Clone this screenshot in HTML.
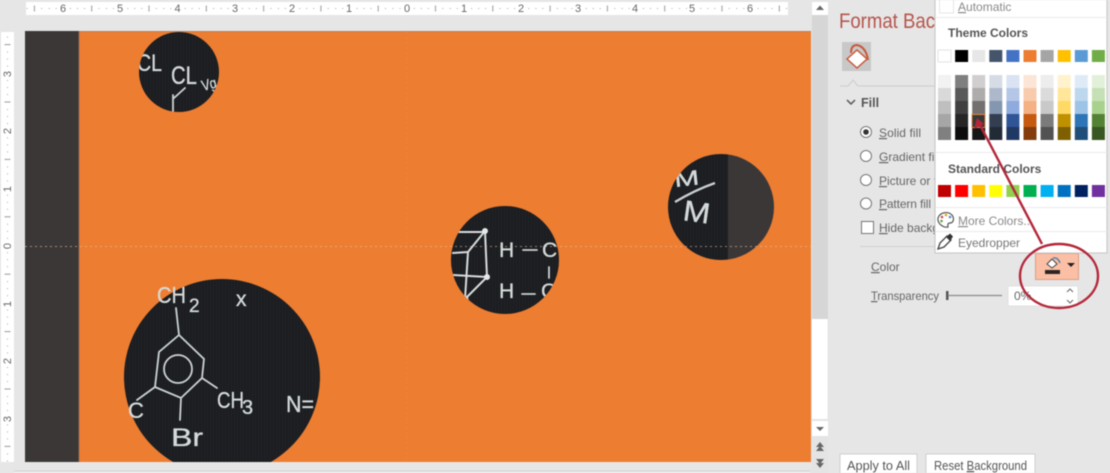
<!DOCTYPE html>
<html lang="en"><head><meta charset="utf-8"><title>Format Background</title>
<style>
html,body{margin:0;padding:0;width:1110px;height:473px;overflow:hidden;background:#e6e6e6}
svg{display:block;filter:blur(.6px)}
text{font-family:"Liberation Sans",sans-serif}
.t{font-size:12px;fill:#666}
.u{text-decoration:underline}
.c{fill:#d4dad9;stroke:#d4dad9;stroke-width:.35}
.b{fill:none;stroke:#ccd3d2;stroke-width:1.8;stroke-linecap:round}
.n{font-size:11px;fill:#666;text-anchor:middle}
</style></head><body>
<svg width="1110" height="473" viewBox="0 0 1110 473" xmlns="http://www.w3.org/2000/svg">
<defs>
<pattern id="rh" x="63" y="2" width="57.3" height="13" patternUnits="userSpaceOnUse">
<g fill="#aaa"><rect x="7" y="6" width="1" height="1"/><rect x="14" y="6" width="1" height="1"/><rect x="21" y="6" width="1" height="1"/><rect x="28.2" y="3.5" width="1" height="6" fill="#999"/><rect x="35.5" y="6" width="1" height="1"/><rect x="43" y="6" width="1" height="1"/><rect x="50" y="6" width="1" height="1"/></g>
</pattern>
<pattern id="rv" x="1" y="73" width="13" height="57.4" patternUnits="userSpaceOnUse">
<g fill="#aaa"><rect x="6" y="7" width="1" height="1"/><rect x="6" y="14" width="1" height="1"/><rect x="6" y="21" width="1" height="1"/><rect x="3.5" y="28.5" width="6" height="1" fill="#999"/><rect x="6" y="36" width="1" height="1"/><rect x="6" y="43" width="1" height="1"/><rect x="6" y="50" width="1" height="1"/></g>
</pattern>
<pattern id="ch" width="3" height="8" patternUnits="userSpaceOnUse"><rect width="3" height="8" fill="#1b1d20"/><rect width="1" height="8" fill="#202225"/></pattern>
<clipPath id="c1"><circle cx="179" cy="72" r="40"/></clipPath>
<clipPath id="c2"><path d="M25 31H811V462H25Z"/></clipPath>
<clipPath id="c3"><circle cx="505" cy="260" r="54"/></clipPath>
<clipPath id="c4"><circle cx="721" cy="207" r="53"/></clipPath>
</defs>

<rect width="1110" height="473" fill="#e6e6e6"/>

<!-- rulers -->
<rect x="26" y="2" width="762" height="13" fill="#fff"/>
<rect x="26" y="2" width="762" height="13" fill="url(#rh)"/>
<g class="n">
<text class="n" x="63" y="12">6</text><text class="n" x="120" y="12">5</text><text class="n" x="177.500" y="12">4</text><text class="n" x="235" y="12">3</text><text class="n" x="292" y="12">2</text><text class="n" x="349" y="12">1</text><text class="n" x="407" y="12">0</text><text class="n" x="464" y="12">1</text><text class="n" x="521" y="12">2</text><text class="n" x="578" y="12">3</text><text class="n" x="635" y="12">4</text><text class="n" x="692" y="12">5</text><text class="n" x="750" y="12">6</text>
</g>
<rect x="1" y="32" width="13" height="430" fill="#fff"/>
<rect x="1" y="32" width="13" height="430" fill="url(#rv)"/>
<text class="n" transform="translate(11,74) rotate(-90)">3</text>
<text class="n" transform="translate(11,131) rotate(-90)">2</text>
<text class="n" transform="translate(11,189) rotate(-90)">1</text>
<text class="n" transform="translate(11,246) rotate(-90)">0</text>
<text class="n" transform="translate(11,304) rotate(-90)">1</text>
<text class="n" transform="translate(11,361) rotate(-90)">2</text>
<text class="n" transform="translate(11,419) rotate(-90)">3</text>

<!-- slide -->
<rect x="25" y="31" width="786" height="431" fill="#ed7d31"/>
<rect x="25" y="31" width="54" height="431" fill="#3b3737"/>
<rect x="79" y="31" width="732" height="1" fill="#b87f5e"/>
<rect x="78.500" y="31" width="1" height="431" fill="#8c6a58"/>

<!-- circle 1 -->
<g clip-path="url(#c1)">
<rect x="135" y="30" width="90" height="85" fill="url(#ch)"/>
<text class="c" x="137" y="71" font-size="24" textLength="25" lengthAdjust="spacingAndGlyphs">CL</text>
<text class="c" x="171" y="84" font-size="25" textLength="26" lengthAdjust="spacingAndGlyphs">CL</text>
<text class="c" transform="translate(203,91) rotate(-14)" font-size="15" textLength="15" lengthAdjust="spacingAndGlyphs">Vg</text>
<path class="b" d="M185 88L174 98M173 95V112"/>
</g>

<!-- circle 2 -->
<g clip-path="url(#c2)">
<circle cx="222" cy="377" r="98" fill="url(#ch)"/>
<g fill="none" stroke="#ccd3d2" stroke-width="1.800" stroke-linecap="round">
<path d="M176 308L179 335L204 359L202 378L181 398L155 387L159 352L179 335"/>
<circle cx="178" cy="369" r="14"/>
<path d="M202 378L217 388M155 387L137 400M181 398L180 420"/>
</g>
<text class="c" x="157" y="303" font-size="23" textLength="29" lengthAdjust="spacingAndGlyphs">CH</text>
<text class="c" x="189" y="312" font-size="19">2</text>
<text class="c" x="236" y="306" font-size="21">x</text>
<text class="c" x="217" y="408" font-size="23" textLength="27" lengthAdjust="spacingAndGlyphs">CH</text>
<text class="c" x="242" y="414" font-size="20">3</text>
<text class="c" x="286" y="412" font-size="23" textLength="28" lengthAdjust="spacingAndGlyphs">N=</text>
<text class="c" x="171" y="446" font-size="25" textLength="32" lengthAdjust="spacingAndGlyphs">Br</text>
<text class="c" x="128" y="418" font-size="22">C</text>
</g>

<!-- circle 3 -->
<g clip-path="url(#c3)">
<rect x="450" y="205" width="110" height="110" fill="url(#ch)"/>
<g fill="none" stroke="#d8dddc" stroke-width="2" stroke-linecap="round">
<path d="M485 231L468 252L465 299L487 277L485 231M453 232H485M453 253L468 252M453 275L487 277"/>
</g>
<circle cx="485" cy="231" r="3" fill="#e4e8e7"/><circle cx="487" cy="277" r="3" fill="#e4e8e7"/><circle cx="466" cy="299" r="2.500" fill="#e4e8e7"/>
<text class="c" x="499" y="257" font-size="21">H</text>
<text class="c" x="542" y="257" font-size="21">C</text>
<text class="c" x="499" y="298" font-size="21">H</text>
<text class="c" x="541" y="298" font-size="21">C</text>
<path class="b" d="M523 250H537M549 267V278M522 294H535"/>
</g>

<!-- circle 4 -->
<g clip-path="url(#c4)">
<rect x="665" y="150" width="63" height="115" fill="url(#ch)"/>
<rect x="728" y="150" width="50" height="115" fill="#3b3737"/>
<text class="c" transform="translate(675,187) rotate(-6)" font-size="21" textLength="25" lengthAdjust="spacingAndGlyphs">M</text>
<path d="M675 202Q695 190 715 183" fill="none" stroke="#c8cfce" stroke-width="2.400"/>
<text class="c" transform="translate(682,220) rotate(8)" font-size="29" textLength="27" lengthAdjust="spacingAndGlyphs">M</text>
</g>

<!-- guides -->
<path d="M25 246.500H811" stroke="#e0c2ac" stroke-opacity=".6" stroke-dasharray="2 3"/>
<path d="M406.500 32V462" stroke="#e99a62" stroke-opacity=".4" stroke-dasharray="2 3"/>

<!-- scrollbar -->
<rect x="811" y="0" width="17" height="473" fill="#e4e4e4"/>
<rect x="812" y="15" width="16" height="304" fill="#d6d6d6"/>
<rect x="812" y="2" width="16" height="13" fill="#fff"/>
<path d="M816 10L820 5.500L824 10Z" fill="#666"/>
<rect x="812" y="319" width="15.500" height="100" fill="#fff"/>
<rect x="812" y="421" width="16" height="15" fill="#fff"/>
<path d="M816 427H824L820 431Z" fill="#666"/>
<path d="M816 447L820 442L824 447ZM816 451L820 446L824 451Z" fill="#666"/>
<path d="M816 459L820 464L824 459ZM816 463L820 468L824 463Z" fill="#666"/>

<!-- bottom edge -->
<rect x="14" y="471" width="796" height="2" fill="#f0f0f0"/>
<rect x="14" y="470.500" width="796" height="1" fill="#cfcfcf"/>

<!-- panel -->
<text x="839" y="28" font-size="21.500" fill="#b5554c" textLength="96" lengthAdjust="spacingAndGlyphs">Format Bac</text>
<rect x="842" y="42" width="29" height="29" fill="#c8c8c8"/>
<path d="M847 59L857 50L867 59L857 68Z" fill="#fff" stroke="#c9583a" stroke-width="1.500"/>
<path d="M851 53Q851 45 857 45Q866 47 868 60" fill="none" stroke="#c9583a" stroke-width="2"/>
<path d="M840 86H848L853 80L858 86H935" fill="none" stroke="#cdcdcd"/>
<path d="M847 100L851 104L855 100" fill="none" stroke="#555" stroke-width="1.500"/>
<text x="861" y="107" font-size="12.500" font-weight="bold" fill="#555">Fill</text>

<circle cx="866" cy="132" r="5.500" fill="#fff" stroke="#777"/><circle cx="866" cy="132" r="2.800" fill="#333"/>
<circle cx="866" cy="156" r="5.500" fill="#fff" stroke="#777"/>
<circle cx="866" cy="180" r="5.500" fill="#fff" stroke="#777"/>
<circle cx="866" cy="203.500" r="5.500" fill="#fff" stroke="#777"/>
<rect x="861.500" y="221.500" width="12" height="12" fill="#fff" stroke="#777"/>
<text class="t" x="879" y="137" textLength="42"><tspan class="u">S</tspan>olid fill</text>
<text class="t" x="879" y="161"><tspan class="u">G</tspan>radient fill</text>
<text class="t" x="879" y="185"><tspan class="u">P</tspan>icture or t</text>
<text class="t" x="879" y="208" textLength="52"><tspan class="u">P</tspan>attern fill</text>
<text class="t" x="879" y="232"><tspan class="u">H</tspan>ide backg</text>
<path d="M860 246.500H935" stroke="#d0d0d0"/>

<text class="t" x="871" y="271"><tspan class="u">C</tspan>olor</text>
<text class="t" x="871" y="300" textLength="68" lengthAdjust="spacingAndGlyphs"><tspan class="u">T</tspan>ransparency</text>
<rect x="946" y="291" width="2.500" height="9" fill="#555"/>
<path d="M948 295.500H1002" stroke="#8a8a8a" stroke-width="1.200"/>
<rect x="1008" y="286" width="70" height="20" fill="#fff" stroke="#e0e0e0"/>
<text class="t" x="1014" y="300" font-size="11.500">0%</text>
<path d="M1067 292L1070 289L1073 292M1067 300L1070 303L1073 300" fill="none" stroke="#666" stroke-width="1"/>

<rect x="1035.500" y="253.500" width="43" height="26" fill="#fbbfa6" stroke="#dc9f85"/>
<path d="M1047 264L1052 259L1057 264L1052 268Z" fill="#fff" stroke="#444"/>
<path d="M1053 258Q1058 257 1060 263" fill="none" stroke="#5a7fa8" stroke-width="1.500"/>
<rect x="1045" y="270" width="15" height="4" fill="#2b2422"/>
<path d="M1067 263H1075L1071 267Z" fill="#222"/>

<!-- bottom buttons -->
<rect x="840" y="454" width="77" height="22" fill="#fff" stroke="#cfcfcf"/>
<text x="847" y="470" font-size="12.500" fill="#555" textLength="63" lengthAdjust="spacingAndGlyphs">Apply to All</text>
<rect x="926" y="454" width="109" height="22" fill="#fff" stroke="#cfcfcf"/>
<text x="934" y="470" font-size="12.500" fill="#555" textLength="93" lengthAdjust="spacingAndGlyphs">Reset <tspan class="u">B</tspan>ackground</text>

<!-- dropdown -->
<rect x="935" y="-1" width="172" height="254" fill="#fff" stroke="#c4c4c4"/>
<rect x="939.500" y="-1" width="14" height="14" fill="#fff" stroke="#e6e6e6"/>
<text x="958" y="11" font-size="12" fill="#8a8a8a"><tspan class="u">A</tspan>utomatic</text>
<path d="M936 17.500H1107M936 152.500H1107M936 207.500H1107M936 231.500H1107" stroke="#eaeaea"/>
<text x="948" y="37" font-size="12" font-weight="bold" fill="#555">Theme Colors</text>
<text x="948" y="173" font-size="12" font-weight="bold" fill="#555">Standard Colors</text>

<g>
<rect x="938" y="50" width="13" height="12" fill="#fff" stroke="#e4e4e4"/>
<rect x="955.100" y="50" width="13" height="12" fill="#000"/>
<rect x="972.200" y="50" width="13" height="12" fill="#e7e6e6"/>
<rect x="989.300" y="50" width="13" height="12" fill="#44546a"/>
<rect x="1006.400" y="50" width="13" height="12" fill="#4472c4"/>
<rect x="1023.500" y="50" width="13" height="12" fill="#ed7d31"/>
<rect x="1040.600" y="50" width="13" height="12" fill="#a5a5a5"/>
<rect x="1057.700" y="50" width="13" height="12" fill="#ffc000"/>
<rect x="1074.800" y="50" width="13" height="12" fill="#5b9bd5"/>
<rect x="1091.900" y="50" width="13" height="12" fill="#70ad47"/>
</g>
<g>
<rect x="938" y="75" width="13" height="13" fill="#f2f2f2"/><rect x="938" y="88" width="13" height="13" fill="#d9d9d9"/><rect x="938" y="101" width="13" height="13" fill="#bfbfbf"/><rect x="938" y="114" width="13" height="13" fill="#a6a6a6"/><rect x="938" y="127" width="13" height="13" fill="#808080"/>
<rect x="955.100" y="75" width="13" height="13" fill="#7f7f7f"/><rect x="955.100" y="88" width="13" height="13" fill="#595959"/><rect x="955.100" y="101" width="13" height="13" fill="#404040"/><rect x="955.100" y="114" width="13" height="13" fill="#262626"/><rect x="955.100" y="127" width="13" height="13" fill="#0d0d0d"/>
<rect x="972.200" y="75" width="13" height="13" fill="#d0cece"/><rect x="972.200" y="88" width="13" height="13" fill="#aeabab"/><rect x="972.200" y="101" width="13" height="13" fill="#757070"/><rect x="972.200" y="114" width="13" height="13" fill="#3a3838"/><rect x="972.200" y="127" width="13" height="13" fill="#171717"/>
<rect x="989.300" y="75" width="13" height="13" fill="#d6dce5"/><rect x="989.300" y="88" width="13" height="13" fill="#adb9ca"/><rect x="989.300" y="101" width="13" height="13" fill="#8497b0"/><rect x="989.300" y="114" width="13" height="13" fill="#333f50"/><rect x="989.300" y="127" width="13" height="13" fill="#222a35"/>
<rect x="1006.400" y="75" width="13" height="13" fill="#dae3f3"/><rect x="1006.400" y="88" width="13" height="13" fill="#b4c7e7"/><rect x="1006.400" y="101" width="13" height="13" fill="#8faadc"/><rect x="1006.400" y="114" width="13" height="13" fill="#2f5597"/><rect x="1006.400" y="127" width="13" height="13" fill="#203864"/>
<rect x="1023.500" y="75" width="13" height="13" fill="#fbe5d6"/><rect x="1023.500" y="88" width="13" height="13" fill="#f8cbad"/><rect x="1023.500" y="101" width="13" height="13" fill="#f4b183"/><rect x="1023.500" y="114" width="13" height="13" fill="#c55a11"/><rect x="1023.500" y="127" width="13" height="13" fill="#843c0c"/>
<rect x="1040.600" y="75" width="13" height="13" fill="#ededed"/><rect x="1040.600" y="88" width="13" height="13" fill="#dbdbdb"/><rect x="1040.600" y="101" width="13" height="13" fill="#c9c9c9"/><rect x="1040.600" y="114" width="13" height="13" fill="#7b7b7b"/><rect x="1040.600" y="127" width="13" height="13" fill="#525252"/>
<rect x="1057.700" y="75" width="13" height="13" fill="#fff2cc"/><rect x="1057.700" y="88" width="13" height="13" fill="#ffe699"/><rect x="1057.700" y="101" width="13" height="13" fill="#ffd966"/><rect x="1057.700" y="114" width="13" height="13" fill="#bf9000"/><rect x="1057.700" y="127" width="13" height="13" fill="#7f6000"/>
<rect x="1074.800" y="75" width="13" height="13" fill="#deebf7"/><rect x="1074.800" y="88" width="13" height="13" fill="#bdd7ee"/><rect x="1074.800" y="101" width="13" height="13" fill="#9dc3e6"/><rect x="1074.800" y="114" width="13" height="13" fill="#2e75b6"/><rect x="1074.800" y="127" width="13" height="13" fill="#1f4e79"/>
<rect x="1091.900" y="75" width="13" height="13" fill="#e2f0d9"/><rect x="1091.900" y="88" width="13" height="13" fill="#c5e0b4"/><rect x="1091.900" y="101" width="13" height="13" fill="#a9d18e"/><rect x="1091.900" y="114" width="13" height="13" fill="#548235"/><rect x="1091.900" y="127" width="13" height="13" fill="#385723"/>
</g>
<rect x="972" y="114.500" width="13" height="13" fill="#3a3838" stroke="#e0883e" stroke-width="1"/>
<g>
<rect x="938" y="185" width="13" height="12" fill="#c00000"/>
<rect x="955.100" y="185" width="13" height="12" fill="#ff0000"/>
<rect x="972.200" y="185" width="13" height="12" fill="#ffc000"/>
<rect x="989.300" y="185" width="13" height="12" fill="#ffff00"/>
<rect x="1006.400" y="185" width="13" height="12" fill="#92d050"/>
<rect x="1023.500" y="185" width="13" height="12" fill="#00b050"/>
<rect x="1040.600" y="185" width="13" height="12" fill="#00b0f0"/>
<rect x="1057.700" y="185" width="13" height="12" fill="#0070c0"/>
<rect x="1074.800" y="185" width="13" height="12" fill="#002060"/>
<rect x="1091.900" y="185" width="13" height="12" fill="#7030a0"/>
</g>

<!-- palette icon -->
<path d="M938 218C940 212 948 211 952 215C955 219 953 223 950 223C947 223 948 226 948 227C944 228 937 224 938 218Z" fill="#fff" stroke="#555" stroke-width="1.200"/>
<circle cx="942" cy="217" r="1.300" fill="#d04a3a"/><circle cx="946" cy="215" r="1.300" fill="#e0a020"/><circle cx="950" cy="217" r="1.300" fill="#4a90c0"/><circle cx="941.500" cy="221" r="1.300" fill="#60a040"/>
<text x="958" y="225" font-size="12" fill="#8a8a8a"><tspan class="u">M</tspan>ore Colors...</text>
<!-- eyedropper icon -->
<path d="M938 249L940 243L947 236L951 240L944 247Z" fill="#fff" stroke="#444" stroke-width="1.300"/>
<path d="M946 237L950 233.500L953 236.500L950 241Z" fill="#333"/>
<text x="958" y="247" font-size="12" fill="#777">Eyedropper</text>

<!-- annotations -->
<path d="M1042 244L979 123" fill="none" stroke="#b3273a" stroke-width="2.400"/>
<path d="M977 118L974 129L984 124Z" fill="#b3273a"/>
<ellipse cx="1059" cy="276" rx="39" ry="32" fill="none" stroke="#b3273a" stroke-width="2.400"/>
</svg>
</body></html>
